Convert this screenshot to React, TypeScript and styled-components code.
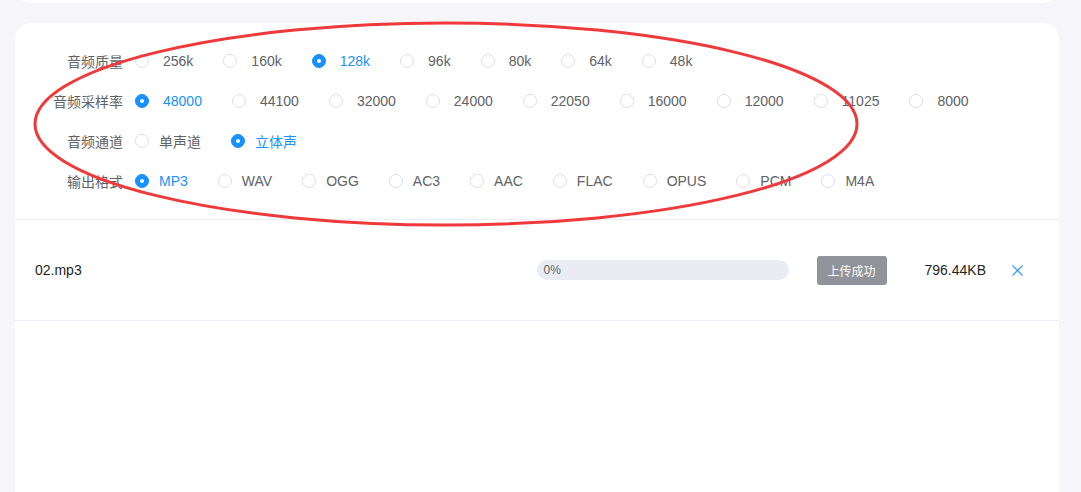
import React from 'react';
import styled, { createGlobalStyle } from 'styled-components';

const GlobalStyle = createGlobalStyle`
  html, body {
    margin: 0;
    padding: 0;
    background: #f5f5fa;
    font-family: "Liberation Sans", "Noto Sans CJK SC", sans-serif;
    font-size: 14px;
    color: #606266;
    overflow: hidden;
  }
`;

const Page = styled.div`
  position: relative;
  height: 492px;
  padding: 0 22px 0 15px;
  overflow: hidden;
`;

const TopCard = styled.div`
  height: 40px;
  margin-top: -37px;
  background: #fff;
  border-radius: 16px;
`;

const MainCard = styled.div`
  margin-top: 20px;
  background: #fff;
  border-radius: 16px 16px 0 0;
  height: 600px;
`;

const Settings = styled.div`
  padding: 18px 20px;
  border-bottom: 1px solid #ebeef5;
`;

const Row = styled.div`
  display: flex;
  align-items: center;
  height: 40px;
`;

const Label = styled.div`
  width: 100px;
  padding-right: 12px;
  box-sizing: border-box;
  text-align: right;
  color: #606266;
  white-space: nowrap;
`;

const Group = styled.div`
  display: flex;
  align-items: center;
`;

const Item = styled.label`
  display: inline-flex;
  align-items: center;
  margin-right: 30px;
  cursor: pointer;
  white-space: nowrap;
`;

const Circle = styled.span<{ $on: boolean }>`
  box-sizing: border-box;
  width: 14px;
  height: 14px;
  border-radius: 50%;
  border: 1px solid ${({ $on }) => ($on ? '#1890ff' : '#dcdfe6')};
  background: ${({ $on }) => ($on ? '#1890ff' : '#fff')};
  display: flex;
  align-items: center;
  justify-content: center;
  &::after {
    content: '';
    width: 4px;
    height: 4px;
    border-radius: 50%;
    background: #fff;
    display: ${({ $on }) => ($on ? 'block' : 'none')};
  }
`;

const ItemText = styled.span<{ $on: boolean; $pad: number }>`
  padding-left: ${({ $pad }) => $pad}px;
  color: ${({ $on }) => ($on ? '#1890ff' : '#606266')};
`;

const FileRow = styled.div`
  display: flex;
  align-items: center;
  height: 100px;
  padding: 0 36px 0 20px;
  border-bottom: 1px solid #ebeef5;
`;

const FileName = styled.div`
  flex: 1;
  color: #1f1f1f;
`;

const Progress = styled.div`
  width: 252px;
  height: 20px;
  border-radius: 10px;
  background: #e9ecf3;
  display: flex;
  align-items: center;
  padding-left: 7px;
  box-sizing: border-box;
  font-size: 12px;
  color: #606266;
`;

const StatusTag = styled.span`
  margin-left: 28px;
  height: 29px;
  width: 70px;
  border-radius: 3px;
  background: #909399;
  color: #fff;
  font-size: 12px;
  display: flex;
  align-items: center;
  justify-content: center;
`;

const Size = styled.span`
  margin-left: 38px;
  color: #1f1f1f;
`;

const CloseButton = styled.button`
  margin-left: 26px;
  border: none;
  background: transparent;
  padding: 0;
  width: 11px;
  height: 11px;
  display: flex;
  cursor: pointer;
`;

const Annotation = styled.svg`
  position: absolute;
  left: 0;
  top: 0;
  pointer-events: none;
`;

interface Option {
  text: string;
  on?: boolean;
}

const rows: { label: string; pad: number; options: Option[] }[] = [
  {
    label: '音频质量',
    pad: 14,
    options: [
      { text: '256k' },
      { text: '160k' },
      { text: '128k', on: true },
      { text: '96k' },
      { text: '80k' },
      { text: '64k' },
      { text: '48k' },
    ],
  },
  {
    label: '音频采样率',
    pad: 14,
    options: [
      { text: '48000', on: true },
      { text: '44100' },
      { text: '32000' },
      { text: '24000' },
      { text: '22050' },
      { text: '16000' },
      { text: '12000' },
      { text: '11025' },
      { text: '8000' },
    ],
  },
  {
    label: '音频通道',
    pad: 10,
    options: [{ text: '单声道' }, { text: '立体声', on: true }],
  },
  {
    label: '输出格式',
    pad: 10,
    options: [
      { text: 'MP3', on: true },
      { text: 'WAV' },
      { text: 'OGG' },
      { text: 'AC3' },
      { text: 'AAC' },
      { text: 'FLAC' },
      { text: 'OPUS' },
      { text: 'PCM' },
      { text: 'M4A' },
    ],
  },
];

const App: React.FC = () => {
  return (
    <Page>
      <GlobalStyle />
      <TopCard />
      <MainCard>
        <Settings>
          {rows.map((row) => (
            <Row key={row.label}>
              <Label>{row.label}</Label>
              <Group>
                {row.options.map((opt) => (
                  <Item key={opt.text}>
                    <Circle $on={!!opt.on} />
                    <ItemText $on={!!opt.on} $pad={row.pad}>
                      {opt.text}
                    </ItemText>
                  </Item>
                ))}
              </Group>
            </Row>
          ))}
        </Settings>
        <FileRow>
          <FileName>02.mp3</FileName>
          <Progress>0%</Progress>
          <StatusTag>上传成功</StatusTag>
          <Size>796.44KB</Size>
          <CloseButton title="删除">
            <svg width="11" height="11" viewBox="0 0 11 11">
              <path
                d="M0.5 0.5 L10.5 10.5 M10.5 0.5 L0.5 10.5"
                stroke="#409eff"
                strokeWidth="1.3"
                fill="none"
              />
            </svg>
          </CloseButton>
        </FileRow>
      </MainCard>
      <Annotation width="1081" height="492">
        <ellipse
          cx="446"
          cy="124"
          rx="411"
          ry="101"
          fill="none"
          stroke="#f0393a"
          strokeWidth="3"
        />
      </Annotation>
    </Page>
  );
};

export default App;
